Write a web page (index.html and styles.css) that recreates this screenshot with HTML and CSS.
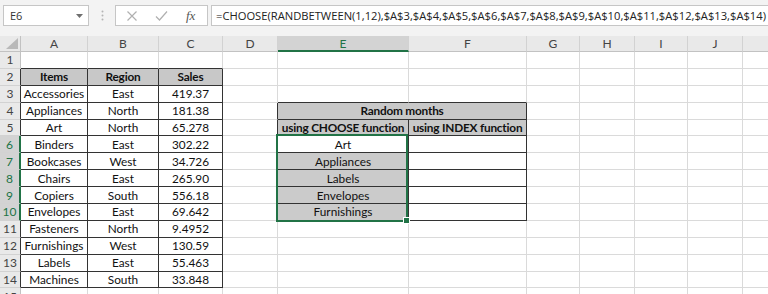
FILE: index.html
```html
<!DOCTYPE html>
<html>
<head>
<meta charset="utf-8">
<link rel="stylesheet" href="styles.css">
</head>
<body>
<div class="app">
  <div class="fbar">
    <div class="namebox"><span class="nb-text">E6</span><svg class="nb-arrow" width="7" height="4" viewBox="0 0 7 4"><path d="M0 0H7L3.5 4Z" fill="#6f6f6f"/></svg></div>
    <div class="dots"><svg width="3" height="11" viewBox="0 0 3 11"><circle cx="1.5" cy="1.5" r="1" fill="#b4b4b4"/><circle cx="1.5" cy="5.5" r="1" fill="#b4b4b4"/><circle cx="1.5" cy="9.5" r="1" fill="#b4b4b4"/></svg></div>
    <div class="btnbox">
      <svg class="ic" width="12" height="12" viewBox="0 0 12 12"><path d="M1.5 1.5L10.5 10.5M10.5 1.5L1.5 10.5" stroke="#b0b0b0" stroke-width="1.2" fill="none"/></svg>
      <svg class="ic" width="13" height="12" viewBox="0 0 13 12"><path d="M1 6.5L4.5 10L12 1.5" stroke="#b0b0b0" stroke-width="1.2" fill="none"/></svg>
      <span class="fx">fx</span>
    </div>
    <div class="formula">=CHOOSE(RANDBETWEEN(1,12),$A$3,$A$4,$A$5,$A$6,$A$7,$A$8,$A$9,$A$10,$A$11,$A$12,$A$13,$A$14)</div>
  </div>

  <div class="sheet">
    <!-- column headers -->
    <div class="ch corner"><svg width="12" height="11" viewBox="0 0 12 11"><path d="M12 0V11H0Z" fill="#b9b9b9"/></svg></div>
    <div class="ch">A</div><div class="ch">B</div><div class="ch">C</div><div class="ch">D</div>
    <div class="ch chsel">E</div><div class="ch">F</div><div class="ch">G</div><div class="ch">H</div>
    <div class="ch">I</div><div class="ch">J</div><div class="ch">K</div>

    <!-- row 1 -->
    <div class="rh">1</div>
    <div class="c bb"></div><div class="c bb"></div><div class="c bb"></div><div class="c"></div>
    <div class="c"></div><div class="c"></div><div class="c"></div><div class="c"></div><div class="c"></div><div class="c"></div><div class="c"></div>

    <!-- row 2 -->
    <div class="rh rht">2</div>
    <div class="c t h">Items</div><div class="c t h">Region</div><div class="c t h">Sales</div><div class="c"></div>
    <div class="c"></div><div class="c"></div><div class="c"></div><div class="c"></div><div class="c"></div><div class="c"></div><div class="c"></div>

    <!-- row 3 -->
    <div class="rh rht">3</div>
    <div class="c t">Accessories</div><div class="c t">East</div><div class="c t">419.37</div><div class="c"></div>
    <div class="c bb"></div><div class="c bb"></div><div class="c"></div><div class="c"></div><div class="c"></div><div class="c"></div><div class="c"></div>

    <!-- row 4 -->
    <div class="rh rht">4</div>
    <div class="c t">Appliances</div><div class="c t">North</div><div class="c t">181.38</div><div class="c br"></div>
    <div class="c t h span2">Random months</div><div class="c"></div><div class="c"></div><div class="c"></div><div class="c"></div><div class="c"></div>

    <!-- row 5 -->
    <div class="rh rht">5</div>
    <div class="c t">Art</div><div class="c t">North</div><div class="c t">65.278</div><div class="c br"></div>
    <div class="c t h">using CHOOSE function</div><div class="c t h">using INDEX function</div><div class="c"></div><div class="c"></div><div class="c"></div><div class="c"></div><div class="c"></div>

    <!-- row 6 -->
    <div class="rh rhsel">6</div>
    <div class="c t">Binders</div><div class="c t">East</div><div class="c t">302.22</div><div class="c br"></div>
    <div class="c t active">Art<div class="selbox"><span class="handle"></span></div></div><div class="c t"></div><div class="c"></div><div class="c"></div><div class="c"></div><div class="c"></div><div class="c"></div>

    <!-- row 7 -->
    <div class="rh rhsel">7</div>
    <div class="c t">Bookcases</div><div class="c t">West</div><div class="c t">34.726</div><div class="c br"></div>
    <div class="c t sel">Appliances</div><div class="c t"></div><div class="c"></div><div class="c"></div><div class="c"></div><div class="c"></div><div class="c"></div>

    <!-- row 8 -->
    <div class="rh rhsel">8</div>
    <div class="c t">Chairs</div><div class="c t">East</div><div class="c t">265.90</div><div class="c br"></div>
    <div class="c t sel">Labels</div><div class="c t"></div><div class="c"></div><div class="c"></div><div class="c"></div><div class="c"></div><div class="c"></div>

    <!-- row 9 -->
    <div class="rh rhsel">9</div>
    <div class="c t">Copiers</div><div class="c t">South</div><div class="c t">556.18</div><div class="c br"></div>
    <div class="c t sel">Envelopes</div><div class="c t"></div><div class="c"></div><div class="c"></div><div class="c"></div><div class="c"></div><div class="c"></div>

    <!-- row 10 -->
    <div class="rh rhsel">10</div>
    <div class="c t">Envelopes</div><div class="c t">East</div><div class="c t">69.642</div><div class="c br"></div>
    <div class="c t sel">Furnishings</div><div class="c t"></div><div class="c"></div><div class="c"></div><div class="c"></div><div class="c"></div><div class="c"></div>

    <!-- row 11 -->
    <div class="rh rht">11</div>
    <div class="c t">Fasteners</div><div class="c t">North</div><div class="c t">9.4952</div><div class="c"></div>
    <div class="c"></div><div class="c"></div><div class="c"></div><div class="c"></div><div class="c"></div><div class="c"></div><div class="c"></div>

    <!-- row 12 -->
    <div class="rh rht">12</div>
    <div class="c t">Furnishings</div><div class="c t">West</div><div class="c t">130.59</div><div class="c"></div>
    <div class="c"></div><div class="c"></div><div class="c"></div><div class="c"></div><div class="c"></div><div class="c"></div><div class="c"></div>

    <!-- row 13 -->
    <div class="rh rht">13</div>
    <div class="c t">Labels</div><div class="c t">East</div><div class="c t">55.463</div><div class="c"></div>
    <div class="c"></div><div class="c"></div><div class="c"></div><div class="c"></div><div class="c"></div><div class="c"></div><div class="c"></div>

    <!-- row 14 -->
    <div class="rh rht">14</div>
    <div class="c t">Machines</div><div class="c t">South</div><div class="c t">33.848</div><div class="c"></div>
    <div class="c"></div><div class="c"></div><div class="c"></div><div class="c"></div><div class="c"></div><div class="c"></div><div class="c"></div>

    <!-- row 15 -->
    <div class="rh">15</div>
    <div class="c"></div><div class="c"></div><div class="c"></div><div class="c"></div>
    <div class="c"></div><div class="c"></div><div class="c"></div><div class="c"></div><div class="c"></div><div class="c"></div><div class="c"></div>
  </div>
</div>
</body>
</html>
```

FILE: styles.css
```css
html, body {
  margin: 0;
  padding: 0;
  background: #ffffff;
  overflow: hidden;
}
.app {
  width: 768px;
  height: 294px;
  overflow: hidden;
  font-family: "Lato", "Liberation Sans", sans-serif;
}

/* formula bar */
.fbar {
  height: 36px;
  box-sizing: border-box;
  background: #f3f3f3;
  display: flex;
  align-items: flex-start;
  padding-top: 5px;
  padding-left: 3px;
}
.namebox {
  width: 86px;
  height: 21px;
  box-sizing: border-box;
  border: 1px solid #c6c6c6;
  background: #fff;
  display: flex;
  align-items: center;
  justify-content: space-between;
  padding: 0 5px 0 6px;
}
.nb-text {
  font-family: "Open Sans", "Liberation Sans", sans-serif;
  font-size: 11px;
  color: #333;
}
.dots {
  width: 26px;
  height: 21px;
  display: flex;
  align-items: center;
  justify-content: center;
}
.btnbox {
  width: 93px;
  height: 21px;
  box-sizing: border-box;
  border: 1px solid #c6c6c6;
  background: #fff;
  display: flex;
  align-items: center;
  padding-left: 10px;
  gap: 17px;
}
.fx {
  font-family: "Liberation Serif", serif;
  font-style: italic;
  font-size: 13px;
  color: #555;
  margin-left: 1px;
}
.formula {
  flex: 1;
  margin-left: 3px;
  height: 21px;
  box-sizing: border-box;
  border: 1px solid #c6c6c6;
  border-right: none;
  background: #fff;
  font-family: "Open Sans", "Liberation Sans", sans-serif;
  font-size: 11.2px;
  color: #222;
  line-height: 19px;
  padding-left: 4px;
  white-space: nowrap;
  overflow: hidden;
}

/* grid */
.sheet {
  display: grid;
  grid-template-columns: 21px 67px 71px 64px 55px 131px 118px 53px 55px 53px 55px 60px;
  grid-template-rows: 16px repeat(15, 16.9px);
  font-size: 11.8px;
}
.ch {
  background: #e9e9e9;
  border-right: 1px solid #d2d2d2;
  border-bottom: 1px solid #c2c2c2;
  box-sizing: border-box;
  color: #444;
  font-size: 12px;
  display: flex;
  align-items: center;
  justify-content: center;
}
.corner {
  justify-content: flex-end;
  align-items: flex-end;
  padding: 0 2px 2px 0;
  border-right-color: #c2c2c2;
}
.chsel {
  background: #d3d3d3;
  color: #217346;
  border-bottom: 2px solid #217346;
}
.rh {
  background: #e9e9e9;
  border-right: 1px solid #c2c2c2;
  border-bottom: 1px solid #d2d2d2;
  box-sizing: border-box;
  color: #444;
  font-size: 12px;
  display: flex;
  align-items: center;
  justify-content: center;
}
.rht {
  border-right-color: #333;
}
.rhsel {
  background: #d3d3d3;
  color: #217346;
  border-right: 2px solid #217346;
}
.c {
  box-sizing: border-box;
  border-right: 1px solid #dadada;
  border-bottom: 1px solid #dadada;
  color: #111;
  display: flex;
  align-items: center;
  justify-content: center;
  white-space: nowrap;
  overflow: hidden;
}
.t {
  border-right-color: #333;
  border-bottom-color: #333;
}
.bb {
  border-bottom-color: #333;
}
.br {
  border-right-color: #333;
}
.h {
  background: #c8c8c8;
  font-weight: bold;
  letter-spacing: -0.2px;
}
.sel {
  background: #cbcbcb;
}
.span2 {
  grid-column: span 2;
}
.active {
  position: relative;
  overflow: visible;
  z-index: 2;
}
.selbox {
  position: absolute;
  left: -2px;
  top: -2px;
  width: 132px;
  height: 87.5px;
  box-sizing: border-box;
  border: 2px solid #217346;
  pointer-events: none;
}
.handle {
  position: absolute;
  right: -4px;
  bottom: -4px;
  width: 5px;
  height: 5px;
  background: #217346;
  border: 1px solid #fff;
}
```
